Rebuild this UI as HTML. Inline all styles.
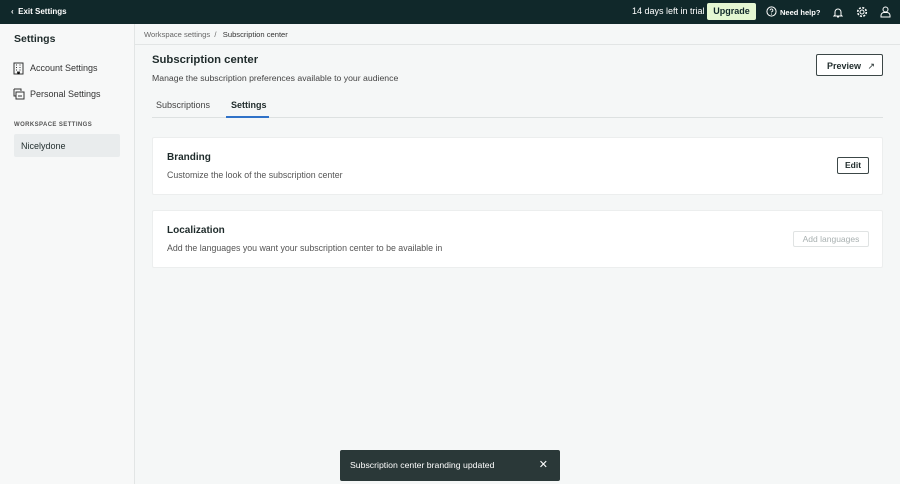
<!DOCTYPE html>
<html><head><style>
*{box-sizing:border-box;margin:0;padding:0}
body{width:900px;height:484px;overflow:hidden;font-family:"Liberation Sans",sans-serif;background:#f5f7f7;color:#1f2b2b;position:relative}
.top{position:absolute;left:0;top:0;width:900px;height:24px;background:#10282a;color:#fff;font-size:8px}
.side{position:absolute;left:0;top:24px;width:135px;height:460px;background:#f7f8f8;border-right:1px solid #e2e5e5}
.main{position:absolute;left:135px;top:24px;right:0;bottom:0}
.abs{position:absolute;white-space:nowrap}
.card{position:absolute;left:17px;width:731px;height:58px;background:#fff;border:1px solid #eceeee;border-radius:2px}
</style></head><body>
<div class="top">
 <div class="abs" style="left:11px;top:7px;font-weight:bold;font-size:8px">‹&nbsp; Exit Settings</div>
 <div class="abs" style="left:632px;top:6px;font-size:9px">14 days left in trial</div>
 <div class="abs" style="left:707px;top:3px;width:49px;height:17px;background:#e4f7d2;color:#10282a;border-radius:2px;font-size:9px;font-weight:bold;text-align:center;line-height:17px">Upgrade</div>
 <svg class="abs" style="left:766px;top:6px" width="11" height="11" viewBox="0 0 12 12"><circle cx="6" cy="6" r="5" fill="none" stroke="#fff" stroke-width="1.1"/><path d="M4.5 4.7a1.5 1.5 0 1 1 2 1.4c-.4.2-.5.5-.5.9" fill="none" stroke="#fff"/><circle cx="6" cy="8.8" r=".6" fill="#fff"/></svg>
 <div class="abs" style="left:780px;top:8px;font-size:7.5px;font-weight:bold">Need help?</div>
 <svg class="abs" style="left:833px;top:7px" width="10" height="11" viewBox="0 0 10 11"><path d="M2 8V5a3 3 0 0 1 6 0v3l1 1H1z M4 10h2" fill="none" stroke="#fff" stroke-width="1"/></svg>
 <svg class="abs" style="left:856px;top:6px" width="12" height="12" viewBox="0 0 12 12"><circle cx="6" cy="6" r="2" fill="none" stroke="#fff"/><circle cx="6" cy="6" r="4.3" fill="none" stroke="#fff" stroke-dasharray="2 1.4" stroke-width="1.6"/></svg>
 <svg class="abs" style="left:880px;top:6px" width="11" height="12" viewBox="0 0 11 12"><circle cx="5.5" cy="3.5" r="2.5" fill="none" stroke="#fff"/><path d="M1 11v-1.5a3 3 0 0 1 3-3h3a3 3 0 0 1 3 3V11z" fill="none" stroke="#fff"/></svg>
</div>
<div class="side">
 <div class="abs" style="left:14px;top:9px;font-size:10.5px;font-weight:bold">Settings</div>
 <svg class="abs" style="left:13px;top:38px" width="11" height="13" viewBox="0 0 11 13"><rect x="1" y="1" width="9" height="11" fill="none" stroke="#333"/><path d="M3 3h1M6.5 3h1M3 5.5h1M6.5 5.5h1M3 8h1M6.5 8h1M4.5 12V10h2v2" stroke="#333"/></svg>
 <div class="abs" style="left:30px;top:39px;font-size:9px;color:#333">Account Settings</div>
 <svg class="abs" style="left:13px;top:64px" width="12" height="12" viewBox="0 0 12 12"><path d="M1 1h7v2M1 1v7h2" fill="none" stroke="#333"/><rect x="3" y="4" width="8" height="7" fill="none" stroke="#333"/><path d="M5 8h4" stroke="#333"/></svg>
 <div class="abs" style="left:30px;top:65px;font-size:9px;color:#333">Personal Settings</div>
 <div class="abs" style="left:14px;top:98px;font-size:6px;color:#555;letter-spacing:.4px;font-weight:bold">WORKSPACE SETTINGS</div>
 <div class="abs" style="left:14px;top:110px;width:106px;height:23px;background:#e9eced;border-radius:2px;font-size:9px;padding:7px 0 0 7px">Nicelydone</div>
</div>
<div class="main">
 <div class="abs" style="left:0;top:0;right:0;height:21px;border-bottom:1px solid #e2e5e5"></div>
 <div class="abs" style="left:9px;top:6px;font-size:7.6px;color:#666">Workspace settings &nbsp;/&nbsp;&nbsp; <span style="color:#333">Subscription center</span></div>
 <div class="abs" style="left:17px;top:30px;font-size:11.3px;font-weight:bold">Subscription center</div>
 <div class="abs" style="left:17px;top:49px;font-size:8.7px;color:#444">Manage the subscription preferences available to your audience</div>
 <div class="abs" style="left:681px;top:30px;width:67px;height:22px;border:1px solid #3c4747;border-radius:2px;background:#fff;font-size:9px;font-weight:bold;padding:6px 0 0 10px">Preview <span style="font-weight:normal;margin-left:4px">↗</span></div>
 <div class="abs" style="left:17px;top:93px;width:731px;border-bottom:1px solid #dde1e1"></div>
 <div class="abs" style="left:21px;top:76px;font-size:9px;color:#444">Subscriptions</div>
 <div class="abs" style="left:96px;top:76px;font-size:9px;font-weight:bold">Settings</div>
 <div class="abs" style="left:91px;top:92px;width:43px;height:2px;background:#2f72c8"></div>
 <div class="card" style="top:113px">
  <div class="abs" style="left:14px;top:14px;font-size:10px;font-weight:bold">Branding</div>
  <div class="abs" style="left:14px;top:32px;font-size:8.8px;color:#555">Customize the look of the subscription center</div>
  <div class="abs" style="left:684px;top:19px;width:32px;height:17px;border:1px solid #3c4747;border-radius:2px;font-size:8.5px;font-weight:bold;text-align:center;line-height:15px">Edit</div>
 </div>
 <div class="card" style="top:186px">
  <div class="abs" style="left:14px;top:14px;font-size:10px;font-weight:bold">Localization</div>
  <div class="abs" style="left:14px;top:32px;font-size:8.8px;color:#555">Add the languages you want your subscription center to be available in</div>
  <div class="abs" style="left:640px;top:20px;width:76px;height:16px;border:1px solid #e0e3e3;border-radius:2px;font-size:8.5px;color:#a8b0b0;text-align:center;line-height:14px">Add languages</div>
 </div>
 <div class="abs" style="left:205px;top:426px;width:220px;height:31px;background:#2a3838;border-radius:2px;color:#fff;font-size:8.7px;padding:10px 0 0 10px">Subscription center branding updated<span style="position:absolute;right:12px;top:8px;font-size:11px">✕</span></div>
</div>
</body></html>
